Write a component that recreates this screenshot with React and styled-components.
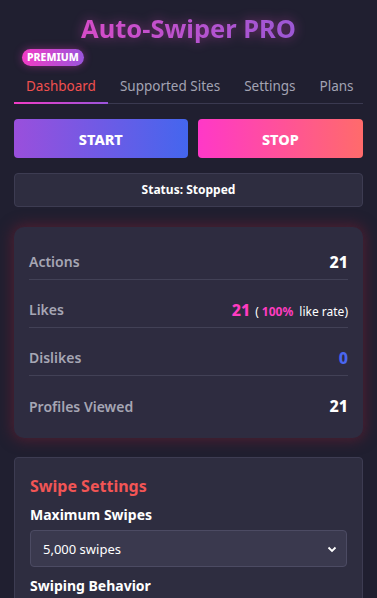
import React from "react";
import styled, { createGlobalStyle } from "styled-components";

const GlobalStyle = createGlobalStyle`
  html, body {
    margin: 0;
    padding: 0;
    background: #201f30;
    font-family: "Noto Sans", "Open Sans", sans-serif;
    color: #fff;
  }
  * { box-sizing: border-box; }
`;

const Page = styled.div`
  width: 377px;
  height: 598px;
  overflow: hidden;
  padding: 0 14px;
  background: #201f30;
`;

const Title = styled.h1`
  margin: 0;
  padding-top: 13px;
  text-align: center;
  font-size: 25.5px;
  line-height: 30px;
  font-weight: 700;
  background: linear-gradient(90deg, #e848c4, #8a5cd9);
  -webkit-background-clip: text;
  background-clip: text;
  color: transparent;
  filter: drop-shadow(0 0 6px rgba(229, 72, 198, 0.45));
`;

const BadgeRow = styled.div`
  padding: 6px 0 0 8px;
  display: flex;
`;

const Badge = styled.span`
  display: inline-block;
  padding: 0 5px;
  height: 17px;
  line-height: 17px;
  border-radius: 9px;
  font-size: 10.5px;
  font-weight: 800;
  color: #fff;
  background: linear-gradient(90deg, #f23cc6, #9a55dc);
  box-shadow: 0 0 8px rgba(242, 60, 198, 0.4);
`;

const Tabs = styled.div`
  display: flex;
  margin-top: 8px;
  border-bottom: 1px solid #3a3950;
  white-space: nowrap;
`;

const Tab = styled.div`
  padding: 0 12px;
  height: 30px;
  line-height: 24px;
  font-size: 13.5px;
  color: ${(p) => (p.$active ? "#f0504f" : "#a3a3b3")};
  border-bottom: 2px solid transparent;
  border-image: ${(p) =>
    p.$active ? "linear-gradient(90deg, #f23cc6, #9a55dc) 1" : "none"};
  margin-bottom: -1px;
  flex-shrink: 0;
`;

const ButtonRow = styled.div`
  display: flex;
  gap: 10px;
  margin-top: 15px;
`;

const ActionButton = styled.button`
  flex: ${(p) => p.$grow};
  height: 39px;
  border: none;
  border-radius: 4px;
  font-family: inherit;
  font-size: 14.5px;
  font-weight: 800;
  color: #fff;
  background: ${(p) => p.$bg};
`;

const StatusBox = styled.div`
  margin-top: 15px;
  height: 34px;
  line-height: 32px;
  text-align: center;
  font-size: 12px;
  font-weight: 700;
  background: #2e2d40;
  border: 1px solid #3d3c52;
  border-radius: 4px;
`;

const StatsCard = styled.div`
  margin-top: 20px;
  padding: 17px 15px 14px;
  background: #2e2c40;
  border-radius: 10px;
  box-shadow: 0 0 14px 2px rgba(120, 30, 50, 0.55);
`;

const StatRow = styled.div`
  display: flex;
  justify-content: space-between;
  align-items: center;
  height: 36px;
  border-bottom: 1px solid #424156;
  margin-bottom: 12px;

  &:last-child {
    border-bottom: none;
    margin-bottom: 0;
  }
`;

const StatLabel = styled.span`
  font-size: 14px;
  font-weight: 600;
  color: #a6a6b4;
`;

const StatValue = styled.span`
  font-size: 16px;
  font-weight: 800;
  color: ${(p) => p.$color || "#fff"};
`;

const RateNote = styled.span`
  font-size: 12px;
  color: #fff;
  margin-left: 5px;
  font-weight: 400;
`;

const RatePct = styled.span`
  color: #ff3cc0;
  font-weight: 700;
  margin: 0 3px;
`;

const SettingsCard = styled.div`
  margin-top: 19px;
  padding: 18px 15px 15px;
  background: #2e2d40;
  border: 1px solid #3d3c52;
  border-radius: 4px;
`;

const SectionTitle = styled.h2`
  margin: 0;
  font-size: 16px;
  line-height: 20px;
  font-weight: 700;
  color: #f25555;
`;

const FieldLabel = styled.div`
  margin-top: 9px;
  font-size: 14px;
  line-height: 20px;
  font-weight: 700;
  color: #fff;
`;

const SelectBox = styled.div`
  margin-top: 5px;
  height: 37px;
  padding: 0 9px 0 12px;
  display: flex;
  align-items: center;
  justify-content: space-between;
  background: #3a394e;
  border: 1px solid #4c4b63;
  border-radius: 4px;
  font-size: 13px;
  color: #fff;
`;

const Chevron = () => (
  <svg width="10" height="10" viewBox="0 0 10 10">
    <path d="M1.5 3.5 L5 7 L8.5 3.5" fill="none" stroke="#fff" strokeWidth="1.8" />
  </svg>
);

export default function App() {
  return (
    <Page>
      <GlobalStyle />
      <Title>Auto-Swiper PRO</Title>
      <BadgeRow>
        <Badge>PREMIUM</Badge>
      </BadgeRow>
      <Tabs>
        <Tab $active>Dashboard</Tab>
        <Tab>Supported Sites</Tab>
        <Tab>Settings</Tab>
        <Tab>Plans</Tab>
      </Tabs>
      <ButtonRow>
        <ActionButton $grow="174" $bg="linear-gradient(90deg, #9a4fdc, #4466ee)">
          START
        </ActionButton>
        <ActionButton $grow="165" $bg="linear-gradient(90deg, #ff38c8, #ff6b6b)">
          STOP
        </ActionButton>
      </ButtonRow>
      <StatusBox>Status: Stopped</StatusBox>
      <StatsCard>
        <StatRow>
          <StatLabel>Actions</StatLabel>
          <StatValue>21</StatValue>
        </StatRow>
        <StatRow>
          <StatLabel>Likes</StatLabel>
          <span>
            <StatValue $color="#ff3cc0">21</StatValue>
            <RateNote>
              (<RatePct>100%</RatePct> like rate)
            </RateNote>
          </span>
        </StatRow>
        <StatRow>
          <StatLabel>Dislikes</StatLabel>
          <StatValue $color="#4a66f0">0</StatValue>
        </StatRow>
        <StatRow>
          <StatLabel>Profiles Viewed</StatLabel>
          <StatValue>21</StatValue>
        </StatRow>
      </StatsCard>
      <SettingsCard>
        <SectionTitle>Swipe Settings</SectionTitle>
        <FieldLabel>Maximum Swipes</FieldLabel>
        <SelectBox>
          <span>5,000 swipes</span>
          <Chevron />
        </SelectBox>
        <FieldLabel>Swiping Behavior</FieldLabel>
      </SettingsCard>
    </Page>
  );
}
